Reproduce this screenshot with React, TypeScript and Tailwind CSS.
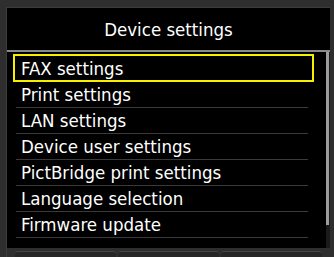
import React from "react";

const items = [
  "FAX settings",
  "Print settings",
  "LAN settings",
  "Device user settings",
  "PictBridge print settings",
  "Language selection",
  "Firmware update",
];

export default function App() {
  return (
    <div
      className="flex h-[257px] w-[334px] flex-col overflow-hidden bg-[#2e2e2e] text-white font-stretch-condensed"
      style={{ fontFamily: '"DejaVu Sans Condensed", "DejaVu Sans", sans-serif' }}
    >
      <div className="ml-[6px] mr-[4px] mt-[7px] flex flex-1 flex-col border-l border-t border-[#3c3c3c]">
        {/* screen */}
        <div className="flex h-[240px] flex-col bg-black">
          {/* title */}
          <div className="h-[42px] pt-[9px] text-center text-[18.5px] leading-[26px]">
            Device settings
          </div>
          {/* list + scrollbar */}
          <div className="flex flex-1 border-t-2 border-[#8a8a8a]">
            <div className="flex-1 pl-[9px] pr-[18px] pt-[4px]">
              {items.map((label, i) => (
                <div
                  key={label}
                  className="relative h-[26px] border-b border-[#3a3a3a] pl-[5px] text-[18.5px] leading-[25px]"
                >
                  {label}
                  {i === 0 && (
                    <div className="absolute -left-[3px] -right-[6px] -top-[2px] -bottom-[1px] border-2 border-[#f5f000]" />
                  )}
                </div>
              ))}
            </div>
            <div className="flex w-[4px] flex-col bg-[#1a1a1a]">
              <div className="h-[173px] w-[3px] bg-[#9c9c9c]" />
            </div>
          </div>
        </div>
        {/* soft keys */}
        <div className="mt-[3px] flex h-[8px] gap-[2px] px-[8px]">
          <div className="flex-1 rounded-t-[3px] border-t border-[#454545] bg-[#262626]" />
          <div className="flex-1 rounded-t-[3px] border-t border-[#454545] bg-[#262626]" />
          <div className="flex-1 rounded-t-[3px] border-t border-[#454545] bg-[#262626]" />
        </div>
      </div>
    </div>
  );
}
